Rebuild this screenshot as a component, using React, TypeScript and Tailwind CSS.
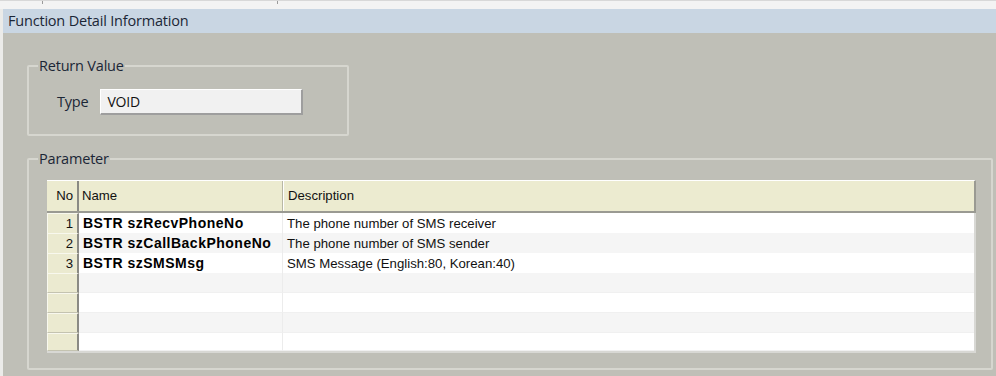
import React from "react";

const rows = [
  { no: "1", name: "BSTR szRecvPhoneNo", desc: "The phone number of SMS receiver" },
  { no: "2", name: "BSTR szCallBackPhoneNo", desc: "The phone number of SMS sender" },
  { no: "3", name: "BSTR szSMSMsg", desc: "SMS Message (English:80, Korean:40)" },
  { no: "", name: "", desc: "" },
  { no: "", name: "", desc: "" },
  { no: "", name: "", desc: "" },
  { no: "", name: "", desc: "" },
];

export default function App() {
  return (
    <div className="w-[996px] h-[376px] overflow-hidden bg-[#bfbfb7] flex flex-col" style={{ fontFamily: '"Open Sans", "Noto Sans", sans-serif' }}>
      <div className="h-[9px] bg-[#f3f3f3] border-t border-[#d8d8d8] flex">
        <div className="w-[43px] border-r border-[#9a9a9a] h-[3px]" />
        <div className="w-[235px] border-r border-[#9a9a9a] h-[3px]" />
      </div>
      <div className="flex-1 flex flex-col border-l-[3px] border-[#ebebe9]">
        <div className="h-[24px] bg-[#c9d6e3] flex items-center px-[5px] text-[14.5px] text-[#1b2636] tracking-[-0.2px]">
          Function Detail Information
        </div>
        <div className="flex flex-col pl-[24px] pr-[3px] pt-[25px] gap-[15px]">
          <fieldset className="w-[322px] h-[78px] border-2 border-[#d6d6cf] rounded-[2px]">
            <legend className="ml-[9px] px-[1px] text-[14.5px] leading-[16px] text-[#1b2636] tracking-[-0.2px]">Return Value</legend>
            <div className="flex items-center gap-[12px] mt-[15px] pl-[28px]">
              <span className="text-[14.5px] text-[#1b2636] tracking-[-0.2px]">Type</span>
              <div className="w-[203px] h-[26px] bg-[#f1f1f1] border-t border-l border-white border-r-2 border-b-2 border-r-[#9e9e9e] border-b-[#9e9e9e] flex items-center px-[6px] text-[14px] text-[#111] tracking-[-0.2px]">
                VOID
              </div>
            </div>
          </fieldset>
          <fieldset className="w-[966px] h-[219px] border-2 border-[#d6d6cf] rounded-[2px]">
            <legend className="ml-[9px] px-[1px] text-[14.5px] leading-[16px] text-[#1b2636] tracking-[-0.2px]">Parameter</legend>
            <div className="mt-[13px] ml-[18px] w-[929px] text-[13.2px] text-[#111]" style={{ fontFamily: '"Liberation Sans", Arial, sans-serif' }}>
              <div className="grid grid-cols-[32px_204px_1fr] h-[33px] bg-[#ecebd0] border-t border-white border-b-2 border-b-[#9a9a92] border-r-2 border-r-[#9a9a92]">
                <div className="flex items-center justify-end pr-[4px] border-r-2 border-[#8a8a84]">No</div>
                <div className="flex items-center pl-[3px] border-r border-[#b9b8a5]">Name</div>
                <div className="flex items-center pl-[4px] border-l border-white">Description</div>
              </div>
              {rows.map((r, i) => (
                <div key={i} className={`grid grid-cols-[32px_204px_1fr] h-[20px] border-r-2 border-r-[#d8d8d4] ${i === rows.length - 1 ? "border-b-2 border-b-[#d8d8d4]" : ""}`}>
                  <div className="flex items-center justify-end pr-[4px] bg-[#ebead0] border-t border-t-[#f8f8ee] border-l border-l-[#f8f8ee] border-b border-b-[#c4c3b0] border-r-2 border-r-[#8a8a84]">{r.no}</div>
                  <div className={`flex items-center pl-[4px] font-bold text-[14px] tracking-[0.5px] text-black ${i % 2 === 1 ? "bg-[#f5f5f5]" : "bg-white"} border-r border-r-[#ececec] border-b border-b-[#f0f0f0]`}>{r.name}</div>
                  <div className={`flex items-center pl-[4px] ${i % 2 === 1 ? "bg-[#f5f5f5]" : "bg-white"} border-b border-b-[#f0f0f0]`}>{r.desc}</div>
                </div>
              ))}
            </div>
          </fieldset>
        </div>
      </div>
    </div>
  );
}
